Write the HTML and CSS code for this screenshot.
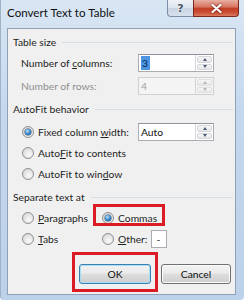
FILE: index.html
```html
<!DOCTYPE html>
<html lang="en">
<head>
  <meta charset="UTF-8" />
  <title>Convert Text to Table</title>
  <link rel="stylesheet" href="styles.css">
</head>
<body>

  <div class="window">
    <!-- Title bar -->
    <div class="titlebar">
      <span class="title">Convert Text to Table</span>
      <div class="caption-btns">
        <span class="cap-btn help">?</span>
        <span class="cap-btn close">
          <svg width="11" height="9" viewBox="0 0 11 9"><path d="M1.5 1 L9.5 8 M9.5 1 L1.5 8" stroke="#fff" stroke-width="2.2" stroke-linecap="round"/></svg>
        </span>
      </div>
    </div>

    <div class="panel">
      <!-- Table size -->
      <div class="group-head"><span>Table size</span><i class="rule"></i></div>
      <div class="row">
        <span class="field-label">Number of <u>c</u>olumns:</span>
        <div class="spin-field">
          <span class="value"><span class="sel">3</span></span>
          <span class="spinner"><b class="up"></b><b class="down"></b></span>
        </div>
      </div>
      <div class="row gap-sm disabled">
        <span class="field-label">Number of rows:</span>
        <div class="spin-field">
          <span class="value">4</span>
          <span class="spinner"><b class="up"></b><b class="down"></b></span>
        </div>
      </div>

      <!-- AutoFit behavior -->
      <div class="group-head"><span>AutoFit behavior</span><i class="rule"></i></div>
      <div class="row first-opt">
        <span class="opt field-label"><i class="radio checked"></i><span>Fixed column <u>w</u>idth:</span></span>
        <div class="spin-field">
          <span class="value">Auto</span>
          <span class="spinner"><b class="up"></b><b class="down"></b></span>
        </div>
      </div>
      <div class="row opt-row"><span class="opt"><i class="radio"></i><span>Auto<u>F</u>it to contents</span></span></div>
      <div class="row opt-row"><span class="opt"><i class="radio"></i><span>AutoFit to win<u>d</u>ow</span></span></div>

      <!-- Separate text at -->
      <div class="group-head"><span>Separate text at</span><i class="rule"></i></div>
      <div class="options">
        <span class="opt"><i class="radio"></i><span><u>P</u>aragraphs</span></span>
        <span class="opt mark mark-commas"><i class="radio checked"></i><span>Co<u>m</u>mas</span></span>
        <span class="opt"><i class="radio"></i><span><u>T</u>abs</span></span>
        <span class="opt"><i class="radio"></i><span><u>O</u>ther:</span><span class="other-field">-</span></span>
      </div>

      <!-- Buttons -->
      <div class="buttons">
        <span class="mark mark-ok"><button class="btn default">OK</button></span>
        <button class="btn">Cancel</button>
      </div>
    </div>
  </div>

</body>
</html>
```

FILE: styles.css
```css
body {
  margin: 0;
  padding: 0;
  background: #fff;
  font-family: Lato, 'Liberation Sans', sans-serif;
  font-size: 10.3px;
  color: #1e1e1e;
}

.window {
  width: 244px;
  height: 300px;
  box-sizing: border-box;
  display: flex;
  flex-direction: column;
  background: linear-gradient(#d9e6f4, #c3d7ed 40%, #bcd2ea);
  border-left: 1px solid #9fb2c6;
  border-radius: 0 0 4px 4px;
  overflow: hidden;
}

.titlebar {
  height: 28px;
  display: flex;
  justify-content: space-between;
  align-items: flex-start;
  flex-shrink: 0;
}

.title {
  font-size: 11.6px;
  color: #111;
  margin: 6px 0 0 6px;
  line-height: 14px;
}

.caption-btns {
  display: flex;
  margin-right: 5px;
}

.cap-btn {
  height: 17px;
  box-sizing: border-box;
  display: flex;
  align-items: center;
  justify-content: center;
  border: 1px solid #7d8ea6;
  border-top: none;
}

.help {
  width: 26px;
  border-radius: 0 0 0 4px;
  border-right: none;
  background: linear-gradient(#eef2f7, #dbe3ed 50%, #c9d4e2 51%, #d7e1ec);
  color: #4c5563;
  font-family: 'DejaVu Sans', sans-serif;
  font-size: 11px;
  font-weight: bold;
  text-shadow: 0 0 2px #fff;
}

.close {
  width: 46px;
  border-radius: 0 0 4px 0;
  border-color: #7b2a1d;
  background: linear-gradient(#e8b0a2, #d5735e 45%, #c43f27 50%, #c94a30 75%, #dc7a5e);
}

.close svg {
  filter: drop-shadow(0 0 1px #5a1408);
}

.panel {
  flex: 1;
  margin: 0 8px 5px 6px;
  background: #f0f0f0;
  border: 1px solid #8ea1b7;
  display: flex;
  flex-direction: column;
}

.group-head {
  display: flex;
  align-items: center;
  height: 14px;
  line-height: 14px;
  margin: 7px 2px 0 5px;
}

.panel > .group-head:first-child {
  margin-top: 6px;
}

.rule {
  flex: 1;
  height: 0;
  border-top: 1px solid #d5dfe5;
  margin-left: 6px;
}

.row {
  display: flex;
  align-items: center;
  height: 18px;
  margin: 5px 0 0 13px;
}

.row.first-opt {
  margin-top: 7px;
}

.row.opt-row {
  margin-top: 3px;
}

.field-label {
  width: 117px;
  flex-shrink: 0;
}

.disabled {
  color: #8f8f8f;
}

.spin-field {
  width: 76px;
  height: 18px;
  box-sizing: border-box;
  display: flex;
  background: #fff;
  border: 1px solid #abadb3;
  border-top-color: #8e939c;
}

.disabled .spin-field {
  background: #f4f4f4;
  border-color: #cfd1d4;
}

.value {
  flex: 1;
  padding: 1px 0 0 2px;
  line-height: 14px;
  color: #111;
}

.disabled .value {
  color: #a3a3a3;
}

.sel {
  display: inline-block;
  background: #4a94e2;
  color: #08254f;
  padding: 0 2px 0 1px;
}

.spinner {
  width: 15px;
  display: flex;
  flex-direction: column;
  border-left: 1px solid #d2d4d8;
  padding: 1px;
  gap: 1px;
}

.spinner b {
  flex: 1;
  display: flex;
  align-items: center;
  justify-content: center;
  border: 1px solid #d3d6db;
  border-radius: 2px;
  background: linear-gradient(#f7f7f7, #e6e6e6);
}

.spinner b::before {
  content: "";
  border-left: 2.5px solid transparent;
  border-right: 2.5px solid transparent;
}

.spinner .up::before {
  border-bottom: 3px solid #4e5d76;
}

.spinner .down::before {
  border-top: 3px solid #4e5d76;
}

.disabled .spinner b::before {
  border-bottom-color: #b7b7b7;
  border-top-color: #b7b7b7;
}

.disabled .spinner b {
  border-color: #e0e1e3;
}

.opt {
  display: inline-flex;
  align-items: center;
  height: 18px;
}

.radio {
  width: 12px;
  height: 12px;
  box-sizing: border-box;
  border-radius: 50%;
  border: 1px solid #8f9194;
  background: radial-gradient(circle at 60% 65%, #fbfbfb, #dcdcdc 70%, #c7c7c7);
  margin: 0 4px 0 1px;
  display: flex;
  align-items: center;
  justify-content: center;
}

.radio.checked::after {
  content: "";
  width: 6px;
  height: 6px;
  border-radius: 50%;
  background: radial-gradient(circle at 40% 35%, #bfe3fb, #2c7fc6 55%, #0d3f78);
  box-shadow: 0 0 0 0.5px #163c63;
}

.options {
  display: grid;
  grid-template-columns: 80px auto;
  justify-items: start;
  row-gap: 3px;
  margin: 5px 0 0 13px;
}

.other-field {
  width: 16px;
  height: 18px;
  box-sizing: border-box;
  margin-left: 4px;
  background: #fff;
  border: 1px solid #abadb3;
  padding-left: 4px;
  line-height: 16px;
}

.buttons {
  display: flex;
  justify-content: flex-end;
  gap: 10px;
  margin: 16px 4px 0 0;
}

.btn {
  width: 70px;
  height: 20px;
  padding: 0;
  font: inherit;
  color: #111;
  border: 1px solid #707070;
  border-radius: 3px;
  background: linear-gradient(#f2f2f2, #ebebeb 45%, #dddddd 50%, #cfcfcf);
  box-shadow: inset 0 0 0 1px #fcfcfc;
}

.btn.default {
  width: 72px;
  display: block;
  border-color: #3c7fb1;
  box-shadow: inset 0 0 0 1px #a9dcf5;
}

.mark {
  position: relative;
}

.mark::after {
  content: "";
  position: absolute;
  border: 3px solid #dc1c24;
  pointer-events: none;
}

.mark-commas::after {
  inset: -5px -8px 1px -8px;
}

.mark-ok::after {
  inset: -12px -7px -8px -7px;
}
```
